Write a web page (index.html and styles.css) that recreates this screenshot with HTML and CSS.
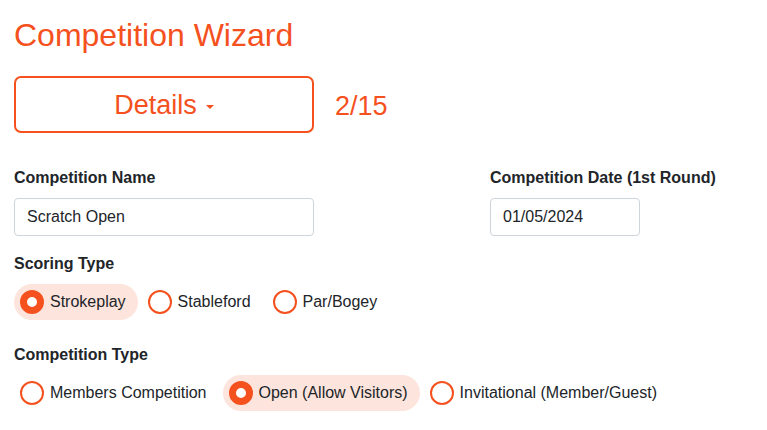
FILE: index.html
```html
<!DOCTYPE html>
<html lang="en">
<head>
<meta charset="utf-8">
<title>Competition Wizard</title>
<link rel="stylesheet" href="styles.css">
</head>
<body>
<main class="wizard">
  <h1 class="title">Competition Wizard</h1>
  <div class="step-bar">
    <button class="step-btn" type="button">Details<span class="caret"></span></button>
    <span class="step-count">2/15</span>
  </div>

  <div class="fields">
    <div class="field">
      <label class="label">Competition Name</label>
      <div class="input input-name">Scratch Open</div>
    </div>
    <div class="field">
      <label class="label">Competition Date (1st Round)</label>
      <div class="input input-date">01/05/2024</div>
    </div>
  </div>

  <div class="group group-scoring">
    <div class="label">Scoring Type</div>
    <div class="radios">
      <span class="radio checked"><span class="dot"></span>Strokeplay</span>
      <span class="radio"><span class="dot"></span>Stableford</span>
      <span class="radio"><span class="dot"></span>Par/Bogey</span>
    </div>
  </div>

  <div class="group group-type">
    <div class="label">Competition Type</div>
    <div class="radios">
      <span class="radio"><span class="dot"></span>Members Competition</span>
      <span class="radio checked"><span class="dot"></span>Open (Allow Visitors)</span>
      <span class="radio"><span class="dot"></span>Invitational (Member/Guest)</span>
    </div>
  </div>
</main>
</body>
</html>
```

FILE: styles.css
```css
* { box-sizing: border-box; }
html, body { margin: 0; padding: 0; background: #fff; }
body {
  font-family: "Liberation Sans", Arial, sans-serif;
  color: #212529;
  font-size: 16px;
}
.wizard { padding: 16px 14px 0 14px; }
.title {
  margin: 0;
  font-size: 32px;
  font-weight: normal;
  line-height: 38px;
  color: #f4511e;
}
.step-bar {
  display: flex;
  align-items: center;
  margin-top: 22px;
}
.step-btn {
  width: 300px;
  height: 57px;
  border: 2px solid #f4511e;
  border-radius: 7px;
  background: #fff;
  color: #f4511e;
  font-family: "Liberation Sans", Arial, sans-serif;
  font-size: 27px;
  padding: 1px 0 0 0;
  display: flex;
  align-items: center;
  justify-content: center;
}
.caret {
  display: inline-block;
  width: 0;
  height: 0;
  margin-left: 9px;
  margin-top: 3px;
  border-top: 4px solid #f4511e;
  border-left: 4px solid transparent;
  border-right: 4px solid transparent;
}
.step-count {
  margin-left: 21px;
  font-size: 27px;
  color: #f4511e;
  padding-top: 3px;
}
.fields {
  display: grid;
  grid-template-columns: 476px 1fr;
  margin-top: 33px;
}
.label {
  display: block;
  font-weight: bold;
  font-size: 16px;
  line-height: 24px;
  color: #212529;
}
.input {
  margin-top: 8px;
  height: 38px;
  border: 1px solid #ced4da;
  border-radius: 4px;
  padding: 0 12px;
  display: flex;
  align-items: center;
  font-size: 16px;
  color: #212529;
}
.input-name { width: 300px; }
.input-date { width: 150px; }
.group-scoring { margin-top: 16px; }
.group-type { margin-top: 23px; }
.radios {
  display: flex;
  gap: 4px;
  margin-top: 8px;
}
.radio {
  display: inline-flex;
  align-items: center;
  gap: 6px;
  height: 36px;
  padding: 0 12px 0 6px;
  border-radius: 18px;
  font-size: 16px;
  color: #212529;
}
.radio.checked { background: #fde4dc; }
.dot {
  display: inline-block;
  width: 24px;
  height: 24px;
  border-radius: 50%;
  border: 2px solid #f4511e;
  background: #fff;
}
.radio.checked .dot { border-width: 7px; }
```
